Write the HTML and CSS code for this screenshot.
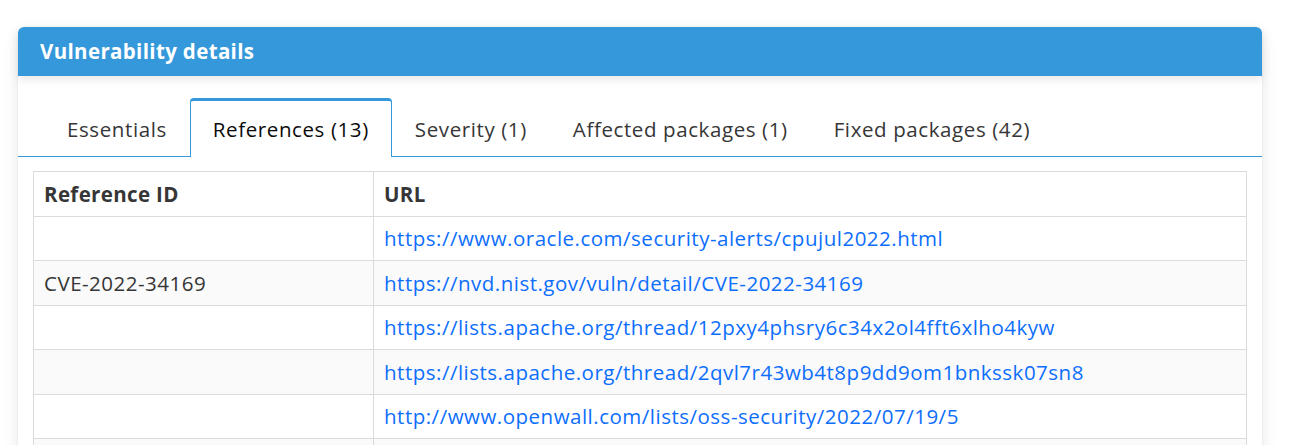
FILE: index.html
```html
<!DOCTYPE html>
<html lang="en">
<head>
<meta charset="utf-8">
<title>Vulnerability details</title>
<link rel="stylesheet" href="styles.css">
</head>
<body>
<div class="card">
  <div class="card-header">Vulnerability details</div>
  <div class="card-body">
    <ul class="tabs">
      <li class="tab"><a class="tab-link" href="#">Essentials</a></li>
      <li class="tab is-active"><a class="tab-link" href="#">References (13)</a></li>
      <li class="tab"><a class="tab-link" href="#">Severity (1)</a></li>
      <li class="tab"><a class="tab-link" href="#">Affected packages (1)</a></li>
      <li class="tab"><a class="tab-link" href="#">Fixed packages (42)</a></li>
    </ul>
    <div class="table-wrap">
      <table class="ref-table">
        <colgroup><col class="col-id"><col class="col-url"></colgroup>
        <thead>
          <tr><th>Reference ID</th><th>URL</th></tr>
        </thead>
        <tbody>
          <tr><td></td><td><a class="link" href="#">https://www.oracle.com/security-alerts/cpujul2022.html</a></td></tr>
          <tr><td>CVE-2022-34169</td><td><a class="link" href="#">https://nvd.nist.gov/vuln/detail/CVE-2022-34169</a></td></tr>
          <tr><td></td><td><a class="link" href="#">https://lists.apache.org/thread/12pxy4phsry6c34x2ol4fft6xlho4kyw</a></td></tr>
          <tr><td></td><td><a class="link" href="#">https://lists.apache.org/thread/2qvl7r43wb4t8p9dd9om1bnkssk07sn8</a></td></tr>
          <tr><td></td><td><a class="link" href="#">http://www.openwall.com/lists/oss-security/2022/07/19/5</a></td></tr>
          <tr class="row-empty"><td></td><td></td></tr>
        </tbody>
      </table>
    </div>
  </div>
</div>
</body>
</html>
```
FILE: styles.css
```css
* { box-sizing: border-box; }
html, body { margin: 0; padding: 0; background: #fff; }
body {
  font-family: "Open Sans", "Noto Sans", sans-serif;
  font-size: 20.5px;
  letter-spacing: 0.5px;
  color: #363636;
  padding: 27px 28px 0 18px;
}
.card {
  width: 1244px;
  background: #fff;
  border-radius: 6px 6px 0 0;
  box-shadow: 0 6px 16px rgba(10, 10, 10, 0.1), 0 0 0 1px rgba(10, 10, 10, 0.02);
}
.card-header {
  position: relative;
  z-index: 1;
  height: 49px;
  background: #3498db;
  color: #fff;
  font-weight: 700;
  letter-spacing: 0.35px;
  line-height: 49px;
  padding-left: 22px;
  border-radius: 6px 6px 0 0;
  box-shadow: 0 4px 10px rgba(10, 10, 10, 0.09);
}
.card-body { padding-top: 22px; }
.tabs {
  display: flex;
  list-style: none;
  margin: 0;
  padding: 0 0 0 26px;
  border-bottom: 1px solid #3498db;
}
.tab { margin-bottom: -1px; }
.tab-link {
  display: block;
  padding: 13px 22px 12px;
  line-height: 30px;
  letter-spacing: 0.6px;
  color: #363636;
  text-decoration: none;
  border: 1px solid transparent;
  border-top-width: 3px;
  border-bottom: 0;
  border-radius: 4px 4px 0 0;
}
.tab.is-active .tab-link {
  color: #0a0a0a;
  background: #fff;
  border-color: #3498db;
  padding-bottom: 13px;
}
.table-wrap { padding: 14px 15px 0; }
.ref-table {
  width: 100%;
  table-layout: fixed;
  border-collapse: collapse;
  border: 1px solid #dbdbdb;
}
.col-id { width: 340px; }
.ref-table th,
.ref-table td {
  border: 1px solid #dbdbdb;
  padding: 6.75px 10px;
  line-height: 30px;
  height: 44.5px;
  text-align: left;
  vertical-align: top;
  white-space: nowrap;
}
.ref-table th {
  font-weight: 700;
  letter-spacing: 0.35px;
  color: #363636;
}
.ref-table tbody tr:nth-child(even) { background: #fafafa; }
.link { color: #0d6efd; text-decoration: none; }
```
